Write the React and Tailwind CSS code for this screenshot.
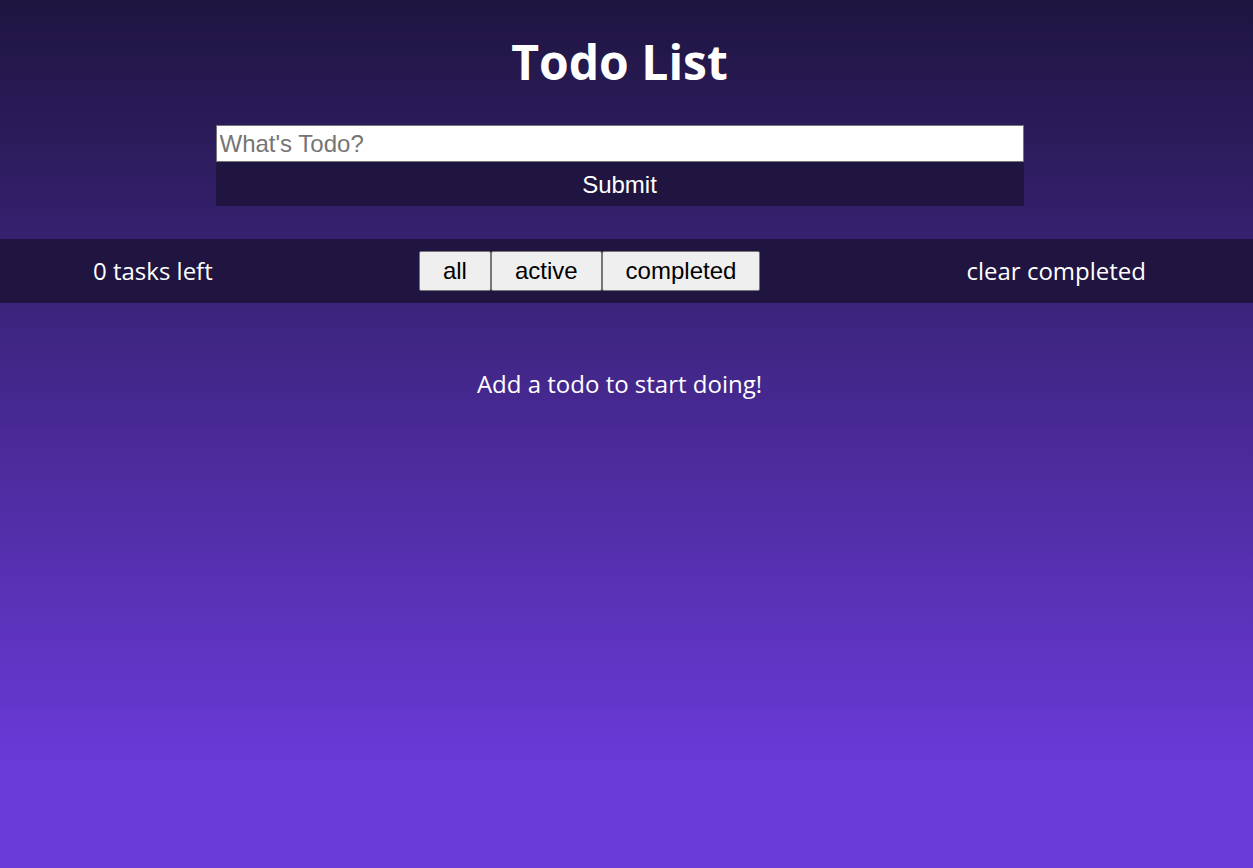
import { useState } from "react";

function App() {
  const [todos, setTodos] = useState([]);
  const [text, setText] = useState("");
  const [filter, setFilter] = useState("all");

  const submit = (e) => {
    e.preventDefault();
    if (!text.trim()) return;
    setTodos([...todos, { id: Date.now(), text, done: false }]);
    setText("");
  };

  const left = todos.filter((t) => !t.done).length;

  return (
    <div className="min-h-screen bg-[linear-gradient(to_bottom,#1e1540_0%,#6a3ad8_88%,#6a3ad8_100%)] font-['Open_Sans',sans-serif] text-white">
      {/* Header */}
      <div className="pr-[14px]">
        <h1 className="pt-[27px] text-center text-[48px] font-bold leading-[70px]">Todo List</h1>

        {/* Form */}
        <form onSubmit={submit} className="mx-auto mt-[28px] flex w-[808px] flex-col">
          <input
            value={text}
            onChange={(e) => setText(e.target.value)}
            placeholder="What's Todo?"
            className="h-[37px] border border-[#767676] bg-white px-[3px] font-['Liberation_Sans',Arial,sans-serif] text-[24px] text-black placeholder:text-[#757575] outline-none"
          />
          <button
            type="submit"
            className="h-[44px] bg-[#1f1540] pt-[1px] font-['Liberation_Sans',Arial,sans-serif] text-[24px] text-white"
          >
            Submit
          </button>
        </form>
      </div>

      {/* Filter bar */}
      <div className="mt-[33px] flex h-[64px] items-center justify-between bg-[#1f1540] pl-[93px] pr-[107px] text-[24px]">
        <span>{left} tasks left</span>
        <div className="flex font-['Liberation_Sans',Arial,sans-serif]">
          {["all", "active", "completed"].map((f) => (
            <button
              key={f}
              onClick={() => setFilter(f)}
              className="h-[40px] rounded-[2px] border border-[#767676] bg-[#efefef] px-[23px] text-[24px] leading-none text-black"
            >
              {f}
            </button>
          ))}
        </div>
        <button className="text-white" onClick={() => setTodos(todos.filter((t) => !t.done))}>
          clear completed
        </button>
      </div>

      {/* List */}
      {todos.length === 0 ? (
        <p className="mt-[63px] pr-[14px] text-center text-[24px]">Add a todo to start doing!</p>
      ) : (
        <ul className="mx-auto mt-[40px] w-[808px]">
          {todos
            .filter((t) => (filter === "all" ? true : filter === "active" ? !t.done : t.done))
            .map((t) => (
              <li key={t.id} className="py-2 text-[24px]">
                {t.text}
              </li>
            ))}
        </ul>
      )}
    </div>
  );
}

export default App;
